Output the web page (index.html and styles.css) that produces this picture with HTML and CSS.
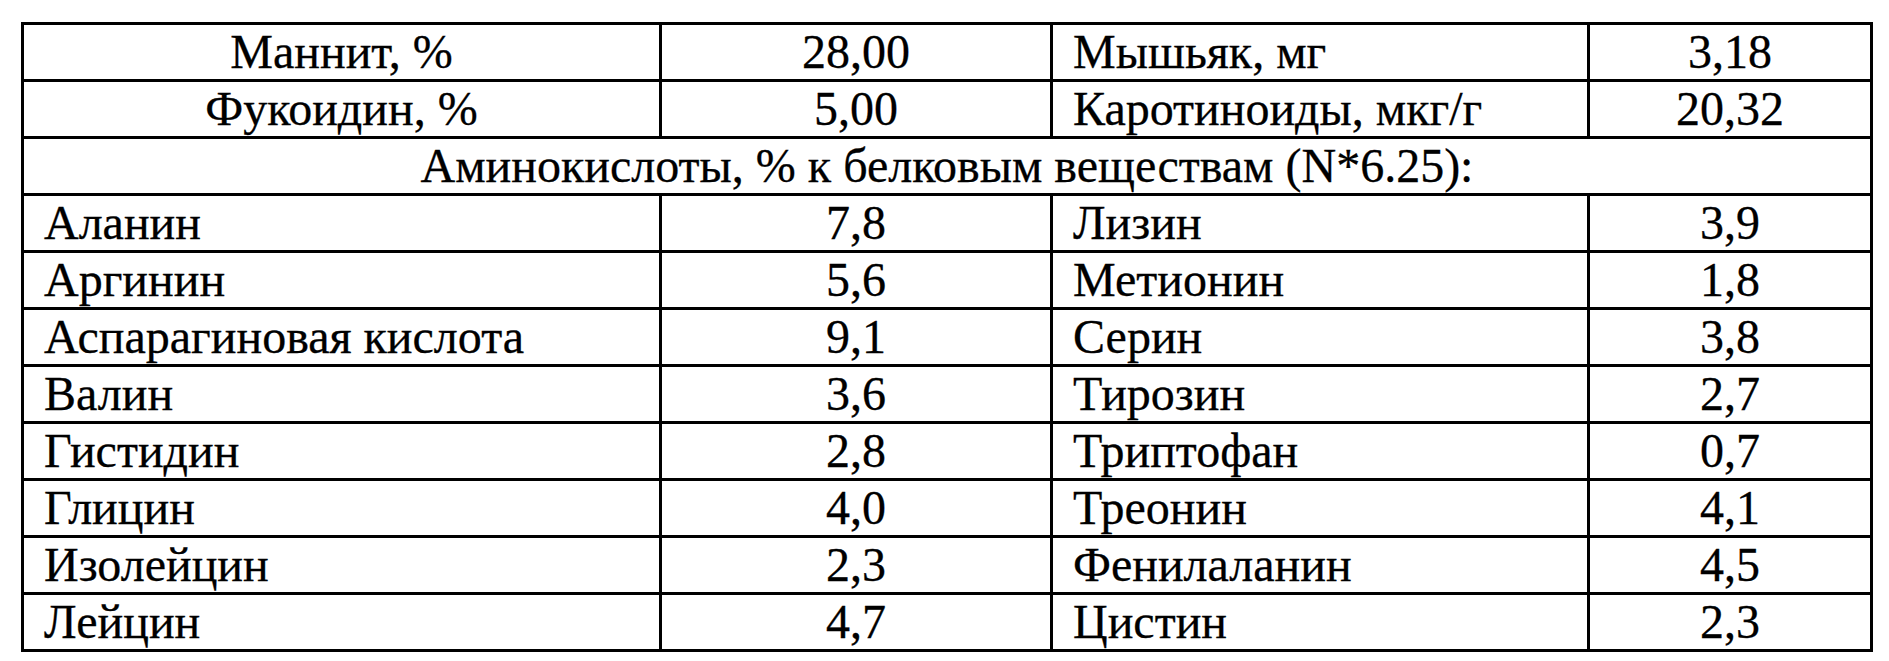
FILE: index.html
```html
<!DOCTYPE html>
<html>
<head>
<meta charset="utf-8">
<title>Таблица</title>
<link rel="stylesheet" href="styles.css">
</head>
<body>
<div class="grid">
  <div class="cell ctr">Маннит, %</div><div class="cell ctr">28,00</div><div class="cell lft">Мышьяк, мг</div><div class="cell ctr">3,18</div>
  <div class="cell ctr">Фукоидин, %</div><div class="cell ctr">5,00</div><div class="cell lft">Каротиноиды, мкг/г</div><div class="cell ctr">20,32</div>
  <div class="cell ctr full">Аминокислоты, % к белковым веществам (N*6.25):</div>
  <div class="cell lft">Аланин</div><div class="cell ctr">7,8</div><div class="cell lft">Лизин</div><div class="cell ctr">3,9</div>
  <div class="cell lft">Аргинин</div><div class="cell ctr">5,6</div><div class="cell lft">Метионин</div><div class="cell ctr">1,8</div>
  <div class="cell lft">Аспарагиновая кислота</div><div class="cell ctr">9,1</div><div class="cell lft">Серин</div><div class="cell ctr">3,8</div>
  <div class="cell lft">Валин</div><div class="cell ctr">3,6</div><div class="cell lft">Тирозин</div><div class="cell ctr">2,7</div>
  <div class="cell lft">Гистидин</div><div class="cell ctr">2,8</div><div class="cell lft">Триптофан</div><div class="cell ctr">0,7</div>
  <div class="cell lft">Глицин</div><div class="cell ctr">4,0</div><div class="cell lft">Треонин</div><div class="cell ctr">4,1</div>
  <div class="cell lft">Изолейцин</div><div class="cell ctr">2,3</div><div class="cell lft">Фенилаланин</div><div class="cell ctr">4,5</div>
  <div class="cell lft">Лейцин</div><div class="cell ctr">4,7</div><div class="cell lft">Цистин</div><div class="cell ctr">2,3</div>
</div>
</body>
</html>
```
FILE: styles.css
```css
body {
  margin: 0;
  background: #ffffff;
  font-family: "Liberation Serif", serif;
}
.grid {
  display: grid;
  grid-template-columns: 635px 388px 534px 280px;
  grid-auto-rows: 54px;
  gap: 3px;
  padding: 3px;
  width: max-content;
  background: #000000;
  margin: 22px 0 0 21px;
}
.cell {
  background: #ffffff;
  color: #000000;
  font-family: "Liberation Serif", serif;
  font-size: 48px;
  line-height: 54px;
  white-space: nowrap;
  -webkit-text-stroke: 0.3px #000000;
}
.ctr { text-align: center; }
.lft { text-align: left; padding-left: 20px; }
.full { grid-column: 1 / -1; }
```
